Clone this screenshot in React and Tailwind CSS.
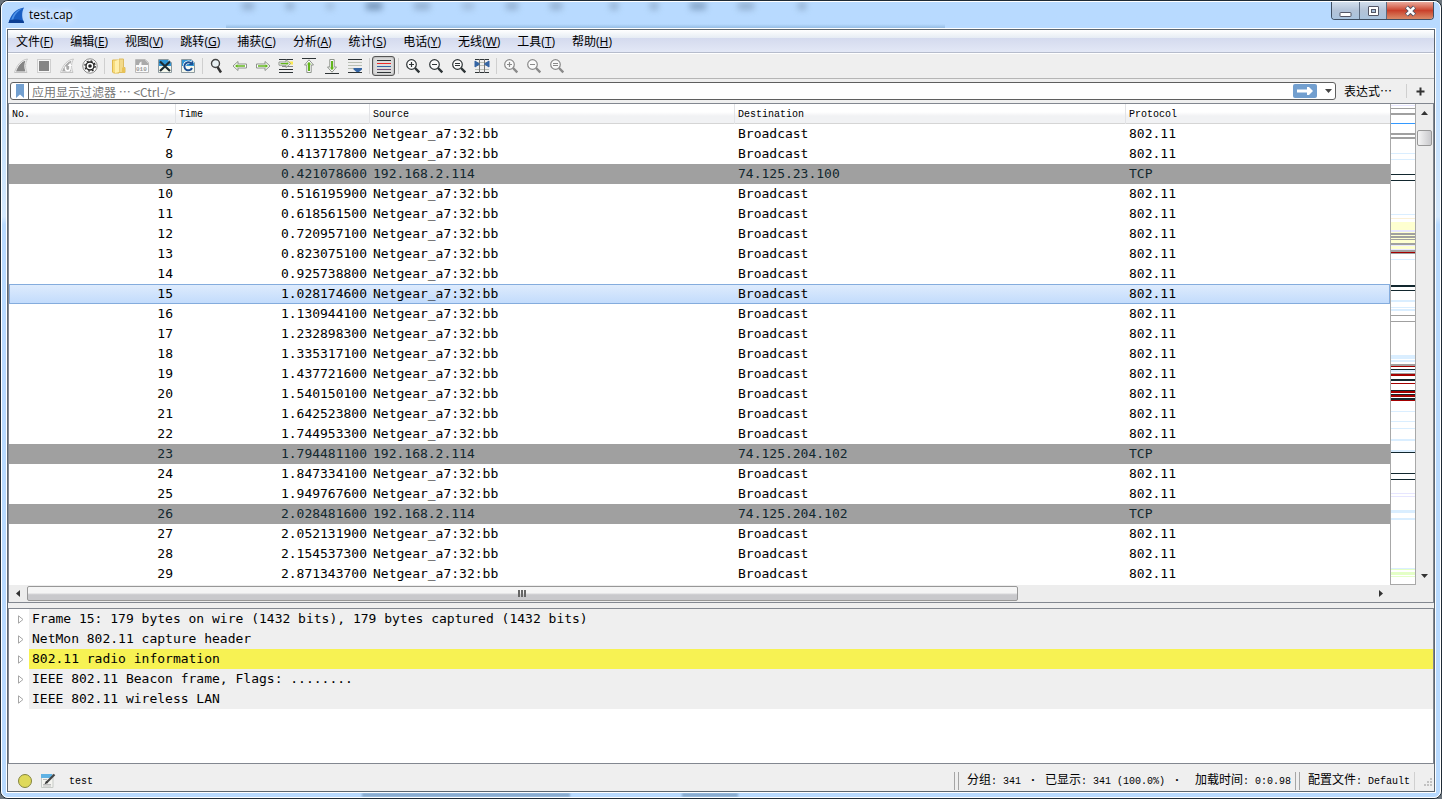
import { useState } from 'react'
import clsx from 'clsx'

const MENUS = [
  ['文件', 'F'], ['编辑', 'E'], ['视图', 'V'], ['跳转', 'G'], ['捕获', 'C'], ['分析', 'A'],
  ['统计', 'S'], ['电话', 'Y'], ['无线', 'W'], ['工具', 'T'], ['帮助', 'H'],
]

const beacon = (no, time) => ({ no, time, source: 'Netgear_a7:32:bb', destination: 'Broadcast', protocol: '802.11' })
const tcp = (no, time, destination) => ({ no, time, source: '192.168.2.114', destination, protocol: 'TCP' })

const PACKETS = [
  beacon(7, '0.311355200'),
  beacon(8, '0.413717800'),
  tcp(9, '0.421078600', '74.125.23.100'),
  beacon(10, '0.516195900'),
  beacon(11, '0.618561500'),
  beacon(12, '0.720957100'),
  beacon(13, '0.823075100'),
  beacon(14, '0.925738800'),
  beacon(15, '1.028174600'),
  beacon(16, '1.130944100'),
  beacon(17, '1.232898300'),
  beacon(18, '1.335317100'),
  beacon(19, '1.437721600'),
  beacon(20, '1.540150100'),
  beacon(21, '1.642523800'),
  beacon(22, '1.744953300'),
  tcp(23, '1.794481100', '74.125.204.102'),
  beacon(24, '1.847334100'),
  beacon(25, '1.949767600'),
  tcp(26, '2.028481600', '74.125.204.102'),
  beacon(27, '2.052131900'),
  beacon(28, '2.154537300'),
  beacon(29, '2.871343700'),
]

const DETAILS = [
  'Frame 15: 179 bytes on wire (1432 bits), 179 bytes captured (1432 bits)',
  'NetMon 802.11 capture header',
  '802.11 radio information',
  'IEEE 802.11 Beacon frame, Flags: ........',
  'IEEE 802.11 wireless LAN',
]

const GREY = '#a0a0a0'
const BLUE = '#daeeff'
const DARK = '#12272e'
const RED = '#a40000'
const LILAC = '#e7e6ff'
const YELLOW = '#feffd0'
const GREEN = '#e4ffc7'

// [top, height, colour]
const STRIPES = [
  [1, 1, LILAC], [4, 1, GREY], [9, 2, GREY], [19, 1, '#3399ff'], [29, 2, GREY], [33, 2, GREY],
  [49, 1, BLUE], [55, 1, BLUE], [70, 1, DARK], [76, 1, DARK], [110, 1, BLUE], [114, 1, '#faf0d7'],
  [118, 31, YELLOW], [126, 2, LILAC], [129, 2, GREY], [132, 2, GREY], [135, 1, GREY], [139, 2, GREY],
  [141, 1, LILAC], [145, 1, LILAC], [146, 2, GREY], [148, 1, RED], [149, 1, GREY], [155, 1, BLUE],
  [181, 2, DARK], [186, 1, DARK], [196, 2, BLUE], [203, 1, BLUE], [205, 2, BLUE], [211, 1, GREY],
  [217, 1, GREY], [251, 4, BLUE], [256, 2, BLUE], [260, 2, GREY], [262, 1, RED], [265, 1, DARK],
  [266, 2, BLUE], [269, 1, GREY], [270, 2, RED], [275, 2, DARK], [279, 1, RED], [286, 1, DARK],
  [287, 2, RED], [290, 1, DARK], [291, 2, RED], [294, 2, DARK], [296, 1, RED], [307, 1, BLUE],
  [317, 1, BLUE], [324, 1, BLUE], [335, 2, BLUE], [346, 2, BLUE], [348, 1, DARK], [369, 1, DARK],
  [375, 1, DARK], [389, 1, LILAC], [392, 1, LILAC], [406, 3, BLUE], [414, 2, BLUE], [464, 1, BLUE],
  [465, 1, GREEN], [468, 3, GREEN], [472, 1, GREEN],
]

function Icon({ children, size = 16 }) {
  return (
    <svg width={size} height={size} viewBox="0 0 16 16" fill="none" aria-hidden="true">
      {children}
    </svg>
  )
}

const Fin = () => (
  <Icon>
    <path d="M1.5 14.5C4 7 8 2 14.5 1C12 5 12 10 14 14.5Z" fill="#fff" stroke="#c4c4c4" />
    <path d="M3 13.5C5 8 8 4 12.5 2.5C11 6 11 10 12.5 13.5Z" fill="#858585" />
  </Icon>
)

const FinRestart = () => (
  <Icon>
    <path d="M1.5 14.5C4 7 8 2 14.5 1C12 5 12 10 14 14.5Z" fill="#fff" stroke="#c4c4c4" />
    <path d="M3 13.5C5 8 8 4 12.5 2.5C11 6 11 10 12.5 13.5Z" fill="#aaa" />
    <path d="M6.5 8.5V10.5A2.2 2.2 0 0 0 11 10.5V7" stroke="#fff" strokeWidth="1.6" />
    <path d="M8.5 8L11 5L13 8Z" fill="#fff" />
  </Icon>
)

const Stop = () => (
  <Icon>
    <rect x="1.5" y="1.5" width="13" height="13" fill="#f7f7f7" stroke="#cfcfcf" />
    <rect x="3" y="3" width="10" height="10" fill="#858585" />
  </Icon>
)

const Gear = () => (
  <Icon>
    <circle cx="8" cy="8" r="7.2" fill="#fff" stroke="#8b8b8b" />
    <circle cx="8" cy="8" r="4" stroke="#222" strokeWidth="1.4" />
    <circle cx="8" cy="8" r="5.2" stroke="#222" strokeWidth="1.2" strokeDasharray="2 2.08" />
    <circle cx="8" cy="8" r="1.8" fill="#222" />
  </Icon>
)

const Folder = () => (
  <Icon>
    <path d="M1.5 2H7L8 3V15H2.5L1.5 14Z" fill="#f7dc7c" stroke="#dfb94f" />
    <path d="M8 1H12.5V9.5H14V14.5H8Z" fill="#f2d98a" stroke="#dcbc62" />
    <path d="M4 3L8 1.5V14L4 15Z" fill="#fff0ad" />
    <path d="M11 9.5H14V14.5H11Z" fill="#eac355" />
  </Icon>
)

const Save = () => (
  <Icon>
    <path d="M1.5 1.5H11L14.5 4.5V14.5H1.5Z" fill="#fafafa" stroke="#bababa" />
    <path d="M2 2H11L14 5V7H2Z" fill="#aaa" />
    <path d="M5 7C5 5 6 4 7.5 3.5V7Z" fill="#f5f5f5" />
    <text x="2" y="13" fontSize="6" fontWeight="700" fontFamily="Liberation Mono, monospace" fill="#999">010</text>
  </Icon>
)

const PageBase = () => (
  <>
    <path d="M1.5 1.5H11.5L14.5 4.5V14.5H1.5Z" fill="#f5f8ec" stroke="#8d9aa0" />
    <path d="M2 2H11.5L14 4.5V8H2Z" fill="#2f94d4" />
    <path d="M11.5 1.5V4.5H14.5Z" fill="#e9eef2" />
  </>
)

const CloseFile = () => (
  <Icon>
    <PageBase />
    <path d="M3 3.5L13 13M13 3.5L3 13" stroke="#1d2b33" strokeWidth="2.2" />
  </Icon>
)

const Reload = () => (
  <Icon>
    <PageBase />
    <path d="M11.5 5.5A4 4 0 1 0 12 10" stroke="#fff" strokeWidth="3.4" />
    <path d="M11 5.3A4 4 0 1 0 12 10" stroke="#1d4f91" strokeWidth="2" />
    <path d="M8.5 7H13V2.5Z" fill="#1d4f91" />
  </Icon>
)

function Magnifier({ sign, color = '#2e3436' }) {
  return (
    <Icon>
      <circle cx="6.5" cy="6.5" r="4.8" fill="#fafafa" stroke={color} strokeWidth="1.2" />
      <path d="M10 10L14.3 14.3" stroke={color} strokeWidth="2.4" />
      {sign === '+' && <path d="M4 6.5H9M6.5 4V9" stroke={color} strokeWidth="1.2" />}
      {sign === '-' && <path d="M4 6.5H9" stroke={color} strokeWidth="1.2" />}
      {sign === '=' && <path d="M4 5.5H9M4 7.5H9" stroke={color} />}
    </Icon>
  )
}

const Find = () => (
  <Icon>
    <circle cx="6.5" cy="5.5" r="4" fill="#e9f1f4" stroke="#444" strokeWidth="1.4" />
    <path d="M8.5 9L12 14.5" stroke="#333" strokeWidth="2.4" />
  </Icon>
)

const Arrow = ({ rotate = 0 }) => (
  <Icon>
    <g transform={`rotate(${rotate} 8 8)`}>
      <path d="M1 8L6 3.5V6H14.5V10H6V12.5Z" fill="#fff" stroke="#8d938b" />
      <path d="M3 8L5.5 6V7.2H13V8.8H5.5V10Z" fill="#62b51c" />
    </g>
  </Icon>
)

const GoTo = () => (
  <Icon>
    <path d="M1 1.5H15M1 11.5H15M1 14.5H15" stroke="#2e3436" />
    <path d="M10 5H15" stroke="#fce94f" strokeWidth="3" />
    <path d="M4 8.5H15" stroke="#888" />
    <path d="M12.5 5.5L8 1.8V4H1V7.2H8V9.5Z" fill="#fff" stroke="#8d938b" />
    <path d="M10.8 5.5L8.6 3.8V5H2.5V6.2H8.6V7.3Z" fill="#62b51c" />
  </Icon>
)

const Top = () => (
  <Icon>
    <path d="M1 0.5H15" stroke="#2e3436" />
    <path d="M8 1.8L12.5 7H10.2V14.5H5.8V7H3.5Z" fill="#fff" stroke="#8d938b" />
    <path d="M8 3.8L10.2 6.5H9V13H7V6.5H5.8Z" fill="#62b51c" />
  </Icon>
)

const Bottom = () => (
  <Icon>
    <path d="M1 15.5H15" stroke="#2e3436" />
    <path d="M8 14.2L12.5 9H10.2V1.5H5.8V9H3.5Z" fill="#fff" stroke="#8d938b" />
    <path d="M8 12.2L10.2 9.5H9V3H7V9.5H5.8Z" fill="#62b51c" />
  </Icon>
)

const AutoScroll = () => (
  <Icon>
    <path d="M1 1.5H15M1 14.5H15" stroke="#2e3436" />
    <path d="M1 4.5H15M1 7.5H15M1 10.5H8" stroke="#b9bfb4" />
    <path d="M6.5 10H15V11.5L12 14H9.5L6.5 11.5Z" fill="#3465a4" />
  </Icon>
)

const Colorize = () => (
  <Icon>
    <path d="M1 2.5H15M1 14.5H15" stroke="#2e3436" />
    <path d="M1 5.5H15" stroke="#ef2929" />
    <path d="M1 8.5H15" stroke="#3465a4" />
    <path d="M1 11.5H15" stroke="#75507b" />
  </Icon>
)

const ResizeColumns = () => (
  <Icon>
    <path d="M1 1.5H15M1 14.5H15" stroke="#2e3436" />
    <path d="M1 4.5H15M1 7.5H15M1 11.5H15" stroke="#b9bfb4" />
    <path d="M5.5 1V15M10.5 1V15" stroke="#777" />
    <path d="M1 3L5.5 6L1 9ZM15 3L10.5 6L15 9Z" fill="#3465a4" stroke="#3465a4" />
  </Icon>
)

const TOOLS = [
  ['开始捕获', <Fin />], ['停止捕获', <Stop />], ['重新开始捕获', <FinRestart />], ['捕获选项', <Gear />], null,
  ['打开', <Folder />], ['保存', <Save />], ['关闭', <CloseFile />], ['重新加载', <Reload />], null,
  ['查找分组', <Find />], ['后退', <Arrow />], ['前进', <Arrow rotate={180} />], ['转到分组', <GoTo />],
  ['第一个分组', <Top />], ['最后一个分组', <Bottom />], ['自动滚动', <AutoScroll />], null,
  ['着色', <Colorize />], null,
  ['放大', <Magnifier sign="+" />], ['缩小', <Magnifier sign="-" />], ['普通大小', <Magnifier sign="=" />],
  ['调整列宽', <ResizeColumns />], null,
  ['放大布局', <Magnifier sign="+" color="#8a8a8a" />], ['缩小布局', <Magnifier sign="-" color="#8a8a8a" />],
  ['重置布局', <Magnifier sign="=" color="#8a8a8a" />],
]

function TitleBar() {
  return (
    <header className="relative flex h-[26px] items-center overflow-hidden pl-1.5 text-xs">
      {/* whatever lies behind the glass */}
      <div className="absolute inset-x-0 top-0 flex h-3 gap-8 pl-60 opacity-60 blur-[3px]" aria-hidden="true">
        <span className="h-2 w-3 bg-[#7d97b5]" />
        <span className="h-2 w-2 bg-[#7d97b5]" />
        <span className="h-2 w-2 bg-[#93aecb]" />
        <span className="h-2 w-4 bg-[#4d6a8c]" />
        <span className="h-2 w-4 bg-[#7d97b5]" />
        <span className="h-2 w-3 bg-[#93aecb]" />
        <span className="h-2 w-3 bg-[#7d97b5]" />
        <span className="h-2 w-3 bg-[#7d97b5]" />
        <span className="ml-4 h-2 w-2 bg-[#7d97b5]" />
        <span className="h-2 w-2 bg-[#7d97b5]" />
        <span className="h-2 w-4 bg-[#6683a5]" />
        <span className="h-2 w-4 bg-[#7d97b5]" />
        <span className="ml-3 h-2 w-2 bg-[#7d97b5]" />
      </div>
      <div className="absolute bottom-0 left-56 h-1 w-1/2 bg-linear-to-b from-transparent to-[#96bce3]" aria-hidden="true" />
      <Icon size={17}>
        <path d="M0.5 15C2.5 7.5 7 1.5 15.2 0.5C12.5 5 13 10.5 15.2 15Z" fill="#1a5fc4" />
        <path d="M3 12C5 6 9 2.5 13.5 1.5C8 5 6 8 5 12Z" fill="#4f93e8" />
        <path d="M0.5 15L1.3 12.5C6 11 10 12 14.4 12.8L15.2 15Z" fill="#0d3f93" />
      </Icon>
      <h1 className="relative ml-1 font-['Open_Sans',sans-serif] text-black [text-shadow:0_0_8px_#fff,0_0_8px_#fff]">test.cap</h1>
      <div className="relative mr-1.5 ml-auto flex h-[18px] self-start overflow-hidden rounded-b border border-t-0 border-[#3f4f63]">
        <button type="button" aria-label="最小化" className="flex w-7 items-center justify-center border-r border-[#5c6b80] bg-linear-to-b from-[#d3dfed] via-[#b3c3d8] to-[#a9c3de] via-50%">
          <svg width="13" height="12" aria-hidden="true"><rect x="1" y="7.5" width="11" height="4" rx="0.5" fill="#fff" stroke="#535666" /></svg>
        </button>
        <button type="button" aria-label="最大化" className="flex w-[27px] items-center justify-center border-r border-[#5c6b80] bg-linear-to-b from-[#d3dfed] via-[#b3c3d8] to-[#a9c3de] via-50%">
          <svg width="13" height="12" aria-hidden="true">
            <rect x="1.5" y="1.5" width="10" height="9" rx="0.5" fill="#fff" stroke="#535666" />
            <rect x="4.5" y="4.5" width="4" height="3" fill="#a9bfd9" stroke="#535666" />
          </svg>
        </button>
        <button type="button" aria-label="关闭" className="flex w-[46px] items-center justify-center bg-linear-to-b from-[#e9a99c] via-[#c9402b] to-[#d98a68] via-50%">
          <svg width="13" height="12" aria-hidden="true">
            <path d="M2.5 2L10.5 10M10.5 2L2.5 10" stroke="#535666" strokeWidth="4.4" />
            <path d="M2.8 2.3L10.2 9.7M10.2 2.3L2.8 9.7" stroke="#fff" strokeWidth="2.6" />
          </svg>
        </button>
      </div>
    </header>
  )
}

function MenuBar() {
  return (
    <nav className="flex h-6 shrink-0 border-b border-white bg-white">
      <div className="flex flex-1 items-center gap-px border-b border-[#b6bccc] bg-[linear-gradient(#fff,#e6ecf4_36%,#d4daee_36%,#e3e8f6)] pt-0.5">
        {MENUS.map(([label, key]) => (
          <button key={key} type="button" className="px-2 text-xs whitespace-nowrap">
            {label}(<u>{key}</u>)
          </button>
        ))}
      </div>
    </nav>
  )
}

function ToolBar() {
  return (
    <div className="flex h-[25px] shrink-0 items-center border-b border-[#b5b5b5] pl-px">
      {TOOLS.map((tool, i) => {
        if (!tool) return <span key={i} className="mr-0.5 ml-[3px] h-4 w-px shrink-0 bg-[#cfcfcf]" />
        const [label, icon] = tool
        const pressed = label === '着色'
        return (
          <button
            key={label}
            type="button"
            aria-label={label}
            className={clsx(
              'flex h-5 w-[23px] shrink-0 items-center justify-center',
              pressed && 'rounded-[3px] border border-[#555] bg-[#dcdcdc] shadow-[inset_0_0_2px_#888]',
            )}
          >
            {icon}
          </button>
        )
      })}
    </div>
  )
}

function FilterBar() {
  const [filter, setFilter] = useState('')

  return (
    <div className="flex h-6 shrink-0 items-center pl-0.5 font-['Noto_Sans_CJK_SC',sans-serif] text-xs">
      <div className="flex h-[18px] flex-1 items-center overflow-hidden rounded-[3px] border border-[#5f5f5f] bg-white">
        <button type="button" aria-label="书签" className="flex h-full w-[18px] items-center justify-center border-r border-[#5f5f5f]">
          <svg width="8" height="14" aria-hidden="true"><path d="M0 0H8V14L4 10.5L0 14Z" fill="#729fcf" /></svg>
        </button>
        <input
          aria-label="显示过滤器"
          value={filter}
          onChange={event => setFilter(event.target.value)}
          placeholder={'应用显示过滤器 ⋯ <Ctrl-/>'}
          className="h-full min-w-0 flex-1 pl-[3px] placeholder-[#777] outline-none"
        />
        <button type="button" aria-label="应用" className="flex h-3.5 w-6 items-center justify-center rounded-xs bg-[#729fcf]">
          <svg width="16" height="8" aria-hidden="true"><path d="M0 2.5H10V0H12L16 4L12 8H10V5.5H0Z" fill="#fff" /></svg>
        </button>
        <button type="button" aria-label="最近的过滤器" className="flex h-full w-[18px] items-center justify-center pl-1">
          <svg width="7" height="4" aria-hidden="true"><path d="M0 0H7L3.5 4Z" fill="#444" /></svg>
        </button>
      </div>
      <button type="button" className="w-[70px] pl-2 text-left whitespace-nowrap">表达式⋯</button>
      <span className="h-3.5 w-px bg-[#cfcfcf]" />
      <button type="button" aria-label="添加" className="flex w-[27px] items-center justify-center">
        <svg width="9" height="9" aria-hidden="true"><path d="M4.5 0.5V8.5M0.5 4.5H8.5" stroke="#333" strokeWidth="2" /></svg>
      </button>
    </div>
  )
}

function PacketTable({ selected, onSelect }) {
  return (
    <div className="min-w-0 flex-1 overflow-hidden">
      <table className="w-full table-fixed border-separate border-spacing-0 font-['DejaVu_Sans_Mono',monospace] text-[13px] leading-5">
        <colgroup>
          <col className="w-[167px]" />
          <col className="w-[194px]" />
          <col className="w-[365px]" />
          <col className="w-[391px]" />
          <col />
        </colgroup>
        <thead>
          <tr className="h-5 bg-linear-to-b from-white from-40% to-[#f1f2f4] to-60% font-['Liberation_Mono',monospace] text-[10px] leading-4 shadow-[inset_0_-1px_0_#d5d5d5]">
            {['No.', 'Time', 'Source', 'Destination', 'Protocol'].map(name => (
              <th key={name} className="border-r border-[#e2e3e6] p-0 pt-0.5 pl-[3px] text-left font-normal last:border-r-0">{name}</th>
            ))}
          </tr>
        </thead>
        <tbody>
          {PACKETS.map(packet => (
            <tr
              key={packet.no}
              onClick={() => onSelect(packet.no)}
              className={clsx(
                'h-5 whitespace-nowrap',
                packet.protocol === 'TCP' && 'bg-[#a0a0a0] text-[#12272e]',
                packet.no === selected && 'bg-linear-to-b from-[#dfecfd] to-[#c1dbfc] shadow-[inset_0_0_0_1px_#84acdd]',
              )}
            >
              <td className="p-0 pr-[3px] text-right">{packet.no}</td>
              <td className="p-0 pr-[3px] text-right">{packet.time}</td>
              <td className="p-0 pl-[3px]">{packet.source}</td>
              <td className="p-0 pl-[3px]">{packet.destination}</td>
              <td className="p-0 pl-[3px]">{packet.protocol}</td>
            </tr>
          ))}
        </tbody>
      </table>
    </div>
  )
}

function Minimap() {
  return (
    <div className="w-[26px] shrink-0 border border-t-0 border-[#a8a8a8] bg-white">
      <svg className="block h-full w-full" viewBox="0 0 24 480" preserveAspectRatio="none" aria-hidden="true">
        {STRIPES.map(([top, height, fill]) => (
          <rect key={top} x="0" y={top} width="24" height={height} fill={fill} shapeRendering="crispEdges" />
        ))}
      </svg>
    </div>
  )
}

function PacketList({ selected, onSelect }) {
  return (
    <section className="flex min-h-0 flex-1 flex-col border border-[#828790] bg-white">
      <div className="flex min-h-0 flex-1">
        <PacketTable selected={selected} onSelect={onSelect} />
        <Minimap />
        <div className="flex w-[17px] shrink-0 flex-col items-center bg-[#ededed]">
          <button type="button" aria-label="向上" className="flex h-[18px] w-full items-center justify-center">
            <svg width="7" height="4" aria-hidden="true"><path d="M0 4H7L3.5 0Z" fill="#333" /></svg>
          </button>
          <div className="mt-2 h-4 w-[15px] rounded-xs border border-[#979797] bg-linear-to-r from-[#f5f5f5] to-[#c9c9cc]" />
          <button type="button" aria-label="向下" className="mt-auto flex h-[18px] w-full items-center justify-center">
            <svg width="7" height="4" aria-hidden="true"><path d="M0 0H7L3.5 4Z" fill="#333" /></svg>
          </button>
        </div>
      </div>
      <div className="flex h-[17px] shrink-0 items-center bg-[#ededed]">
        <button type="button" aria-label="向左" className="flex w-[18px] justify-center">
          <svg width="4" height="7" aria-hidden="true"><path d="M4 0V7L0 3.5Z" fill="#333" /></svg>
        </button>
        <div className="flex h-[15px] flex-[990] items-center justify-center gap-px rounded-xs border border-[#979797] bg-linear-to-b from-[#f5f5f5] from-45% to-[#c9c9cc] to-60%">
          <span className="h-[7px] w-0.5 bg-[#666]" />
          <span className="h-[7px] w-0.5 bg-[#666]" />
          <span className="h-[7px] w-0.5 bg-[#666]" />
        </div>
        <div className="flex-[355]" />
        <button type="button" aria-label="向右" className="mr-[43px] flex w-[18px] justify-center">
          <svg width="4" height="7" aria-hidden="true"><path d="M0 0V7L4 3.5Z" fill="#333" /></svg>
        </button>
      </div>
    </section>
  )
}

function PacketDetails() {
  const [active, setActive] = useState(2)

  return (
    <section className="mt-[5px] h-[156px] shrink-0 border border-[#828790] bg-white font-['DejaVu_Sans_Mono',monospace] text-[13px] leading-5">
      <ul>
        {DETAILS.map((line, i) => (
          <li key={line} className="flex h-5">
            <button type="button" aria-label="展开" className="flex w-5 items-center justify-center pl-1">
              <svg width="6" height="9" aria-hidden="true"><path d="M0.5 0.8V8.2L5 4.5Z" fill="#fff" stroke="#a6a6a6" /></svg>
            </button>
            <span
              onClick={() => setActive(i)}
              className={clsx('flex-1 pl-[3px] whitespace-nowrap', i === active ? 'bg-[#f7f253]' : 'bg-[#efefef]')}
            >
              {line}
            </span>
          </li>
        ))}
      </ul>
    </section>
  )
}

const Mono = ({ children }) => (
  <span className="font-['Liberation_Mono',monospace] text-[10px] whitespace-pre">{children}</span>
)

const Dot = () => <span className="inline-block w-6 text-center font-bold">·</span>

const Grip = () => <span className="h-[18px] w-[5px] shrink-0 border-x border-[#a5a5a5]" />

function StatusBar() {
  return (
    <footer className="flex h-[27px] shrink-0 items-center pt-1.5 text-xs whitespace-nowrap">
      <button type="button" aria-label="专家信息" className="ml-2.5 size-3.5 rounded-full border border-[#85853f] bg-[#dfd95a]" />
      <button type="button" aria-label="捕获文件注释" className="ml-2">
        <Icon>
          <path d="M1.5 1.5H13V14.5H1.5Z" fill="#f4f4f0" stroke="#c7cbc7" />
          <path d="M1 1H12V5H1Z" fill="#5fb2e4" />
          <path d="M3 6.5H7M3 11.5H11M3 13H11" stroke="#bbb" />
          <path d="M6.5 9.5L14.5 1.5" stroke="#444" strokeWidth="2.2" />
          <path d="M4.5 11.2L6 8L8 10Z" fill="#333" />
        </Icon>
      </button>
      <span className="ml-[13px]"><Mono>test</Mono></span>
      <div className="ml-auto flex items-center">
        <Grip />
        <span className="pl-2">
          分组<Mono>: 341</Mono><Dot />已显示<Mono>: 341 (100.0%)</Mono><Dot /><span className="pl-1.5">加载时间</span><Mono>: 0:0.98</Mono>
        </span>
        <span className="ml-1 flex"><Grip /></span>
        <span className="pr-1 pl-2">配置文件<Mono>: Default</Mono></span>
        <span className="h-[18px] w-px bg-[#d0d0d0]" />
        <svg className="mr-0.5 ml-2 self-end" width="9" height="12" aria-hidden="true">
          <path d="M7 0h2v2H7zM4 3h2v2H4zM7 3h2v2H7zM1 6h2v2H1zM4 6h2v2H4zM7 6h2v2H7z" fill="#c2c2c2" />
        </svg>
      </div>
    </footer>
  )
}

export default function App() {
  const [selected, setSelected] = useState(15)

  return (
    <div className="h-screen bg-[#6b747c] font-['Open_Sans','Noto_Sans_CJK_SC',sans-serif] text-black">
      <div className="flex h-full flex-col overflow-hidden rounded-lg border border-[#1e2a35] bg-white">
        <div className="relative flex min-h-0 flex-1 flex-col rounded-[7px] border border-white bg-linear-to-b from-[#b8daff] from-4% via-[#d4e8fc] via-27% to-[#b8daff] to-28%">
          <TitleBar />
          <div className="absolute inset-x-0 bottom-0 flex h-1 overflow-hidden pl-[25%]" aria-hidden="true">
            <span className="w-52 bg-[#86a8cc] blur-[1px]" />
            <span className="ml-28 w-14 bg-[#86a8cc] blur-[1px]" />
          </div>
          <div className="mx-1 mb-1 flex min-h-0 flex-1 flex-col border border-white">
            <main className="flex min-h-0 flex-1 flex-col border border-[#5c6670] bg-[#efefef]">
              <MenuBar />
              <ToolBar />
              <FilterBar />
              <PacketList selected={selected} onSelect={setSelected} />
              <PacketDetails />
              <StatusBar />
            </main>
          </div>
        </div>
      </div>
    </div>
  )
}
